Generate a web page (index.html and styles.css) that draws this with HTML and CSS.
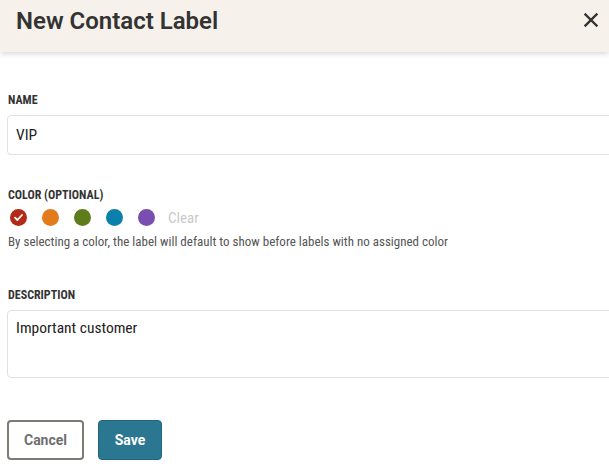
FILE: index.html
```html
<!DOCTYPE html>
<html lang="en">
<head>
<meta charset="utf-8">
<title>New Contact Label</title>
<link rel="stylesheet" href="styles.css">
</head>
<body>
<div class="modal">
  <header class="modal-header">
    <h1 class="modal-title">New Contact Label</h1>
    <button class="close-btn" aria-label="Close">
      <svg width="14" height="14" viewBox="0 0 14 14"><path d="M1.5 1.5 L12.5 12.5 M12.5 1.5 L1.5 12.5" stroke="#333" stroke-width="2.4" stroke-linecap="square" fill="none"/></svg>
    </button>
  </header>
  <form class="modal-body">
    <div class="field">
      <label class="field-label">NAME</label>
      <div class="input">VIP</div>
    </div>
    <div class="field field-color">
      <label class="field-label">COLOR (OPTIONAL)</label>
      <div class="swatches">
        <span class="swatch red selected">
          <svg width="9" height="7" viewBox="0 0 9 7"><path d="M1 3.6 L3.4 6 L8 1" stroke="#fff" stroke-width="1.8" fill="none" stroke-linecap="round" stroke-linejoin="round"/></svg>
        </span>
        <span class="swatch orange"></span>
        <span class="swatch green"></span>
        <span class="swatch blue"></span>
        <span class="swatch purple"></span>
        <span class="clear">Clear</span>
      </div>
      <p class="help">By selecting a color, the label will default to show before labels with no assigned color</p>
    </div>
    <div class="field field-desc">
      <label class="field-label">DESCRIPTION</label>
      <div class="input textarea">Important customer</div>
    </div>
    <div class="actions">
      <button type="button" class="btn btn-cancel">Cancel</button>
      <button type="button" class="btn btn-save">Save</button>
    </div>
  </form>
</div>
</body>
</html>
```
FILE: styles.css
```css
html, body {
  margin: 0;
  padding: 0;
  background: #fff;
  overflow: hidden;
}
body {
  font-family: Roboto, "Liberation Sans", sans-serif;
  font-stretch: 87.5%;
  color: #333;
}
.modal {
  width: 660px;
}
.modal-header {
  height: 52px;
  box-sizing: border-box;
  background: #f6f1eb;
  box-shadow: 0 2px 5px rgba(0,0,0,0.15);
  display: flex;
  align-items: flex-start;
  justify-content: space-between;
  padding: 6px 0 0 16px;
  width: 609px;
}
.modal-title {
  margin: 0;
  font-size: 24px;
  line-height: 30px;
  font-weight: 600;
  font-stretch: 95%;
  color: #333;
}
.close-btn {
  border: 0;
  background: transparent;
  padding: 0;
  margin: 7px 11px 0 0;
  width: 14px;
  height: 14px;
  display: flex;
}
.modal-body {
  padding: 40px 0 0 8px;
  display: flex;
  flex-direction: column;
}
.field {
  display: flex;
  flex-direction: column;
}
.field-label {
  font-size: 12px;
  line-height: 16px;
  font-weight: 700;
  color: #333;
  margin-bottom: 7px;
}
.input {
  margin-left: -1px;
  height: 40px;
  box-sizing: border-box;
  border: 1px solid #e4e1da;
  border-radius: 4px;
  padding: 0 8px;
  font-size: 15.5px;
  line-height: 38px;
  color: #222;
}
.field-color {
  margin-top: 32px;
}
.field-color .field-label {
  margin-bottom: 4px;
}
.swatches {
  display: flex;
  align-items: center;
  gap: 15px;
  margin-left: 2px;
  height: 21px;
}
.swatch {
  width: 17px;
  height: 17px;
  border-radius: 50%;
  display: flex;
  align-items: center;
  justify-content: center;
}
.red { background: #b32b18; }
.orange { background: #e37a1c; }
.green { background: #5f7c1b; }
.blue { background: #0b80ab; }
.purple { background: #7a4db1; }
.clear {
  font-size: 15px;
  color: #c9c9c9;
  margin-left: -2px;
}
.help {
  margin: 6px 0 0;
  font-size: 13px;
  line-height: 16px;
  color: #555;
}
.field-desc {
  margin-top: 37px;
}
.textarea {
  height: 68px;
  line-height: 20px;
  padding-top: 7px;
}
.actions {
  display: flex;
  gap: 14px;
  margin-top: 42px;
  margin-left: -1px;
}
.btn {
  height: 40px;
  box-sizing: border-box;
  border-radius: 4px;
  font-family: inherit;
  font-size: 14px;
  font-weight: 700;
  padding: 0;
}
.btn-cancel {
  width: 77px;
  background: #fff;
  border: 2px solid #7e7a75;
  color: #6f6f6f;
}
.btn-save {
  width: 64px;
  background: #2b7690;
  border: 1px solid #22667d;
  color: #fff;
}
```
